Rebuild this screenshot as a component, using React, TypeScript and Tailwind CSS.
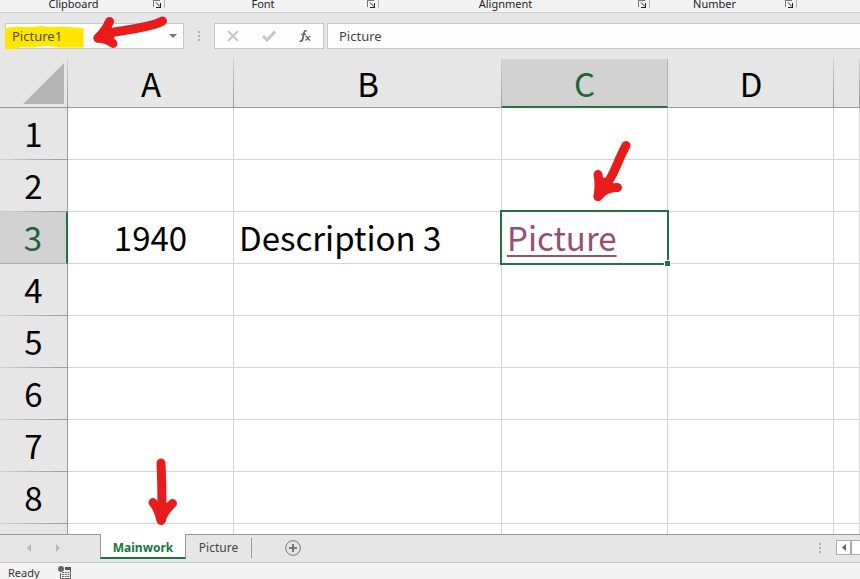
import { useState } from "react";

const groups = [
  { name: "Clipboard", width: "w-[165px]" },
  { name: "Font", width: "w-[214px]" },
  { name: "Alignment", width: "w-[271px]" },
  { name: "Number", width: "w-[147px]" },
];

const columns = ["A", "B", "C", "D", ""];
const rows = [1, 2, 3, 4, 5, 6, 7, 8];

const cells: Record<string, string> = {
  A3: "1940",
  B3: "Description 3",
  C3: "Picture",
};

function Ribbon() {
  return (
    <div className="flex h-[13px] shrink-0 border-b border-[#d0d0d0] bg-[#f3f3f3]">
      {groups.map((g) => (
        <div key={g.name} className={`flex shrink-0 ${g.width}`}>
          <span className="flex-1 pr-px text-center text-[11px] leading-2 text-[#222]">{g.name}</span>
          <button aria-label={`${g.name} settings`} className="flex h-2 w-[17px] items-start border-r border-[#b5b5b5] pl-[5px]">
            <svg width="9" height="8" viewBox="0 0 9 8" fill="none" shapeRendering="crispEdges">
              <path d="M0.5 7V0.5H7" stroke="#777" />
              <path d="M3 2.5L7 6.5" stroke="#222" shapeRendering="auto" />
              <path d="M7.5 3V7.5H3" stroke="#222" />
            </svg>
          </button>
        </div>
      ))}
    </div>
  );
}

function Dots({ className }: { className: string }) {
  return (
    <span className={`flex flex-col gap-[2px] ${className}`} aria-hidden="true">
      <i className="size-[2px] bg-[#b0b0b0]" />
      <i className="size-[2px] bg-[#b0b0b0]" />
      <i className="size-[2px] bg-[#b0b0b0]" />
    </span>
  );
}

function FormulaBar() {
  const [name, setName] = useState("Picture1");
  const [value, setValue] = useState("Picture");
  return (
    <div className="relative flex h-[46px] shrink-0 items-center text-[13px] text-[#444]">
      <div className="relative ml-[5px] flex h-[26px] w-[179px] items-center border border-[#c6c6c6] bg-[#fdfdfd]">
        <svg className="absolute -left-px top-px" width="80" height="25" viewBox="0 0 80 25" aria-hidden="true">
          <path d="M0 3L12 1.500Q24 3 36 1Q48 2.500 58 1.500L78.500 3V22.500H53Q44 19.500 34 21.500Q24 23 16 22Q10 24.500 0 24.500Z" fill="#ffe600" />
        </svg>
        <input
          aria-label="Name box"
          value={name}
          onChange={(e) => setName(e.target.value)}
          className="relative h-6 min-w-0 flex-1 bg-transparent pl-[6px] text-[#55500a] outline-none"
        />
        <button aria-label="Show names" className="flex w-5 items-center justify-center">
          <svg width="8" height="4" viewBox="0 0 8 4" fill="#777">
            <path d="M0 0H8L4 4Z" />
          </svg>
        </button>
      </div>
      <Dots className="ml-[14px] mr-[14px]" />
      <div className="flex h-[26px] w-[110px] items-center border border-[#c6c6c6] bg-[#fdfdfd]">
        <button aria-label="Cancel" className="flex flex-1 justify-center">
          <svg width="12" height="12" viewBox="0 0 12 12" fill="none" stroke="#c6c6c6" strokeWidth="2">
            <path d="M1 1L11 11M11 1L1 11" />
          </svg>
        </button>
        <button aria-label="Enter" className="flex flex-1 justify-center">
          <svg width="14" height="12" viewBox="0 0 14 12" fill="none" stroke="#c6c6c6" strokeWidth="3">
            <path d="M1 6L5 10L13 1.500" />
          </svg>
        </button>
        <button aria-label="Insert function" className="flex flex-1 justify-center">
          <svg width="12" height="12" viewBox="0 0 12 12" fill="none" stroke="#666">
            <path d="M7.500 1C6 0.200 5.200 1.500 4.700 4L3.600 9C3.200 11 2 11.800 0.500 11.200" strokeWidth="1.800" />
            <path d="M2.200 4.300H7" strokeWidth="1.300" />
            <path d="M6.500 6.300C8.600 5.600 8.600 10.800 11.200 10" strokeWidth="1.600" />
            <path d="M11.500 6.200C9.500 6 8.300 10.600 6 10.200" strokeWidth="1.300" />
          </svg>
        </button>
      </div>
      <input
        aria-label="Formula bar"
        value={value}
        onChange={(e) => setValue(e.target.value)}
        className="ml-[3px] h-[26px] min-w-0 flex-1 border border-r-0 border-[#c6c6c6] bg-[#fdfdfd] pl-[11px] outline-none"
      />
      <svg className="pointer-events-none absolute left-[90px] top-0" width="80" height="38" viewBox="90 13 80 38" fill="none" stroke="#e81c1c" strokeWidth="9" strokeLinecap="round" strokeLinejoin="round" aria-hidden="true">
        <path d="M162.500 21C150 28 128 29 110 33L98 38" />
        <path d="M109.500 21.500Q106 30 98 38Q108 39 113 43.500" />
        <path d="M104 34L109 31L110 37Z" />
      </svg>
    </div>
  );
}

function ColumnHeader({ name }: { name: string }) {
  const active = name === "C";
  return (
    <th
      scope="col"
      className={
        active
          ? "h-[49px] border-b-2 border-r border-b-[#217346] border-r-[#b0b0b0] bg-[#d2d2d2] p-0 font-normal text-[#1e6339]"
          : "h-[49px] border-b border-[#999] bg-[#e6e6e6] bg-[linear-gradient(to_bottom,#d0d0d0,#999)] bg-[length:1px_100%] bg-right bg-no-repeat p-0 font-normal"
      }
    >
      {name}
    </th>
  );
}

function RowHeader({ row }: { row: number }) {
  const active = row === 3;
  return (
    <th
      scope="row"
      className={
        active
          ? "h-[52px] border-b border-r-2 border-b-[#b0b0b0] border-r-[#217346] bg-[#d2d2d2] p-0 pb-0.5 font-normal text-[#1e6339]"
          : "h-[52px] border-r border-[#999] bg-[#e6e6e6] bg-[linear-gradient(to_right,#d0d0d0,#999)] bg-[length:100%_1px] bg-bottom bg-no-repeat p-0 pb-0.5 font-normal"
      }
    >
      {row}
    </th>
  );
}

function Cell({ id }: { id: string }) {
  const text = cells[id];
  const selected = id === "C3";
  const align = id.startsWith("A") ? "text-center" : "pl-[5px] text-left";
  return (
    <td className={`relative h-[52px] border-b border-r border-[#d4d4d4] p-0 pb-0.5 whitespace-nowrap ${align}`}>
      {selected ? (
        <>
          <a href="#picture" className="text-[#954f72] underline decoration-2 underline-offset-4">
            {text}
          </a>
          <span className="pointer-events-none absolute -inset-[2px] z-10 border-2 border-[#217346]" />
          <span className="absolute -bottom-1 -right-1 z-10 size-[7px] border border-white bg-[#217346]" />
        </>
      ) : (
        text
      )}
    </td>
  );
}

function Sheet() {
  return (
    <div className="relative min-h-0 flex-1 overflow-hidden bg-white">
      <table className="w-full table-fixed border-separate border-spacing-0 font-['Noto_Sans_CJK_SC',sans-serif] text-[33px] leading-10 text-black">
        <colgroup>
          <col className="w-[68px]" />
          <col className="w-[166px]" />
          <col className="w-[268px]" />
          <col className="w-[166px]" />
          <col className="w-[166px]" />
          <col />
        </colgroup>
        <thead>
          <tr>
            <th className="h-[49px] border-b border-[#999] bg-[#e6e6e6] bg-[linear-gradient(to_bottom,#d0d0d0,#999)] bg-[length:1px_100%] bg-right bg-no-repeat p-0">
              <button aria-label="Select all" className="ml-auto mr-1 block">
                <svg width="41" height="41" viewBox="0 0 41 41" fill="#b4b4b4">
                  <path d="M41 0V41H0Z" />
                </svg>
              </button>
            </th>
            {columns.map((c) => (
              <ColumnHeader key={c} name={c} />
            ))}
          </tr>
        </thead>
        <tbody>
          {rows.map((r) => (
            <tr key={r}>
              <RowHeader row={r} />
              {columns.map((c) => (
                <Cell key={c} id={`${c}${r}`} />
              ))}
            </tr>
          ))}
          <tr>
            <th scope="row" aria-label="Row 9" className="h-[52px] border-r border-[#999] bg-[#e6e6e6] p-0" />
            {columns.map((c) => (
              <Cell key={c} id={`${c}9`} />
            ))}
          </tr>
        </tbody>
      </table>
      <svg className="pointer-events-none absolute left-[590px] top-[77px]" width="44" height="70" viewBox="590 136 44 70" fill="none" stroke="#e81c1c" strokeWidth="9" strokeLinecap="round" strokeLinejoin="round" aria-hidden="true">
        <path d="M626 145.500C619 158 616 169 610 179L598 196.500" />
        <path d="M598 174.500Q600 184 598 196.500Q606 187 617.500 187.500" />
        <path d="M600 190L604 182L609 185Z" />
      </svg>
      <svg className="pointer-events-none absolute left-[145px] top-[396px]" width="36" height="75" viewBox="145 455 36 75" fill="none" stroke="#e81c1c" strokeWidth="9" strokeLinecap="round" strokeLinejoin="round" aria-hidden="true">
        <path d="M161 463C161.500 476 162.500 490 161.500 520" />
        <path d="M153 502.500Q158 508 161 520.500Q164 511 172.500 503.500" />
        <path d="M158 508L161 518L166 507Z" />
      </svg>
    </div>
  );
}

function SheetTabs() {
  return (
    <div className="flex h-[29px] shrink-0 border-b border-[#c6c6c6] text-xs">
      <div className="flex w-[100px] shrink-0 items-center border-t border-[#999] pb-0.5 pl-[27px]">
        <button aria-label="Previous sheet">
          <svg width="4" height="8" viewBox="0 0 4 8" fill="#b8b8b8"><path d="M4 0V8L0 4Z" /></svg>
        </button>
        <button aria-label="Next sheet" className="ml-[25px]">
          <svg width="4" height="8" viewBox="0 0 4 8" fill="#b8b8b8"><path d="M0 0V8L4 4Z" /></svg>
        </button>
      </div>
      <button className="h-[25px] w-[86px] shrink-0 border-x border-b-2 border-x-[#999] border-b-[#217346] bg-white pt-1 font-bold text-[#217346]">
        Mainwork
      </button>
      <div className="flex min-w-0 flex-1 items-center border-t border-[#999] pb-0.5">
        <button className="h-5 w-[66px] shrink-0 border-r border-[#999] text-[#444]">Picture</button>
        <button aria-label="New sheet" className="ml-[33px]">
          <svg width="16" height="16" viewBox="0 0 16 16" fill="none" stroke="#777">
            <circle cx="8" cy="8" r="7.300" />
            <path d="M4 8H12M8 4V12" strokeWidth="2" />
          </svg>
        </button>
        <Dots className="ml-auto" />
        <div className="ml-[15px] flex h-[15px] w-6 shrink-0">
          <button aria-label="Scroll left" className="flex w-[15px] shrink-0 items-center justify-center border border-[#ababab] bg-white">
            <svg width="4" height="7" viewBox="0 0 4 7" fill="#666"><path d="M4 0V7L0 3.500Z" /></svg>
          </button>
          <div className="flex-1 border-y border-l border-[#ababab] bg-white" />
        </div>
      </div>
    </div>
  );
}

function StatusBar() {
  return (
    <div className="flex h-4 shrink-0 items-end bg-[#f3f3f3] pl-2 text-[11px] leading-3 text-[#333]">
      <span className="w-[50px]">Ready</span>
      <button aria-label="Record macro">
        <svg width="13" height="13" viewBox="0 0 13 13" className="block">
          <path d="M7 1H13V4H7Z" fill="#555" />
          <path d="M2.500 7V12.500H12.500V4" fill="none" stroke="#666" />
          <circle cx="3" cy="3" r="3" fill="#666" />
          <path d="M4 6.500H11.500M4 8.500H11.500M4 10.500H11.500" stroke="#666" strokeDasharray="2 0.700" />
        </svg>
      </button>
    </div>
  );
}

export default function App() {
  return (
    <div className="flex h-screen flex-col overflow-hidden bg-[#e6e6e6] font-['Noto_Sans',sans-serif]">
      <Ribbon />
      <FormulaBar />
      <Sheet />
      <SheetTabs />
      <StatusBar />
    </div>
  );
}
